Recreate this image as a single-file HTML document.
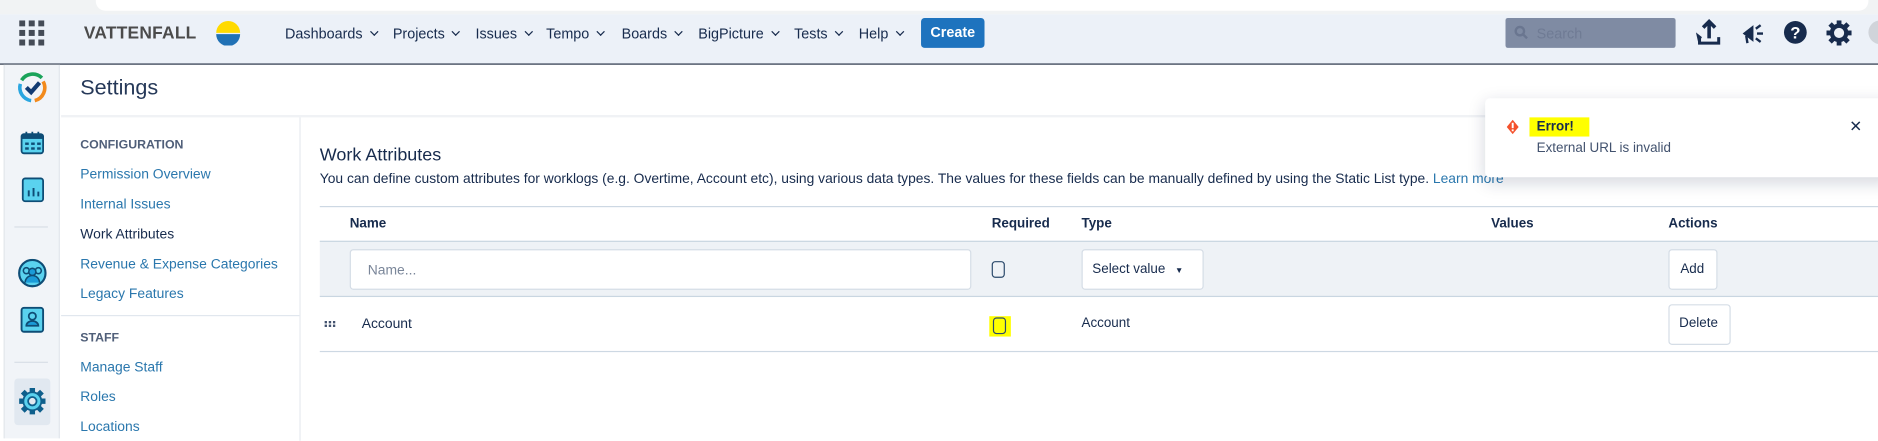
<!DOCTYPE html>
<html><head><meta charset="utf-8"><style>
*{box-sizing:border-box;margin:0;padding:0}
html,body{width:1878px;height:438px;overflow:hidden;background:#fff;font-family:"Liberation Sans",sans-serif}
#w{position:absolute;left:0;top:0;width:1568px;height:366px;transform:scale(1.1977);transform-origin:0 0}
.a{position:absolute;white-space:nowrap}
.nav{font-size:12px;color:#172b4d;top:21px}
.nav:after{content:"";display:inline-block;width:4px;height:4px;border-right:1.5px solid #172b4d;border-bottom:1.5px solid #172b4d;transform:rotate(45deg);margin-left:7px;position:relative;top:-3px}
.ln{font-size:11.6px;color:#2a77ad;left:67px}
.hd{font-size:10.3px;font-weight:bold;color:#505f79;left:67px}
.th{font-size:11.2px;font-weight:bold;color:#172b4d;top:181px}
.hl{position:absolute;height:1px;background:#cdd8e3}
.box{position:absolute;border:1px solid #d5dde6;border-radius:3px;background:#fff}
.cb{position:absolute;width:11px;height:14px;border:1.5px solid #2b4a6b;border-radius:3px}
</style></head><body><div id="w">
<div class="a" style="left:0;top:0;width:1568px;height:12px;background:#f1f3f4"></div>
<div class="a" style="left:80px;top:0;width:1480px;height:9px;background:#fff;border-radius:0 0 8px 8px"></div>
<div class="a" style="left:0;top:12px;width:1568px;height:42px;background:#ecf1f8;border-bottom:1.5px solid #2a3547"></div>
<svg class="a" style="left:16px;top:17px" width="21" height="21"><g fill="#454c57"><rect x="0" y="0" width="5" height="5"/><rect x="8" y="0" width="5" height="5"/><rect x="16" y="0" width="5" height="5"/><rect x="0" y="8" width="5" height="5"/><rect x="8" y="8" width="5" height="5"/><rect x="16" y="8" width="5" height="5"/><rect x="0" y="16" width="5" height="5"/><rect x="8" y="16" width="5" height="5"/><rect x="16" y="16" width="5" height="5"/></g></svg>
<div class="a" style="left:70px;top:20px;font-size:14.5px;font-weight:bold;color:#4b4b4b;letter-spacing:.2px">VATTENFALL</div>
<svg class="a" style="left:180px;top:17px" width="21" height="21"><path d="M0.5 10.5A10 10 0 0 1 20.5 10.5Z" fill="#ffda00"/><path d="M0.5 11.5A10 10 0 0 0 20.5 11.5Z" fill="#2071b5"/></svg>
<div class="a nav" style="left:238px">Dashboards</div>
<div class="a nav" style="left:328px">Projects</div>
<div class="a nav" style="left:397px">Issues</div>
<div class="a nav" style="left:456px">Tempo</div>
<div class="a nav" style="left:519px">Boards</div>
<div class="a nav" style="left:583px">BigPicture</div>
<div class="a nav" style="left:663px">Tests</div>
<div class="a nav" style="left:717px">Help</div>
<div class="a" style="left:769px;top:15px;width:53px;height:25px;background:#1e73be;border-radius:3px;color:#fff;font-size:12px;font-weight:bold;text-align:center;line-height:25px">Create</div>
<div class="a" style="left:1257px;top:15px;width:142px;height:25px;background:#7f8ba3;border-radius:2px"></div>
<svg class="a" style="left:1264px;top:21px" width="12" height="12"><circle cx="5" cy="5" r="3.5" stroke="#6a7690" stroke-width="2" fill="none"/><path d="M8 8l3 3" stroke="#6a7690" stroke-width="2"/></svg>
<div class="a" style="left:1283px;top:21px;font-size:12px;color:#6f7b94">Search</div>
<svg class="a" style="left:1414px;top:15px" width="24" height="25"><path d="M13 3v14M8 8l5-5 5 5" stroke="#172b4d" stroke-width="3" fill="none"/><path d="M5 16v5h16v-5" stroke="#172b4d" stroke-width="2.5" fill="none"/><path d="M2 12l5 4-3 5" fill="#172b4d"/></svg>
<svg class="a" style="left:1452px;top:17px" width="22" height="22"><path d="M3 11l9-7v14z" fill="#172b4d"/><path d="M14 7l4-3M15 11h5M14 15l4 3" stroke="#172b4d" stroke-width="2"/><path d="M6 13l1 6" stroke="#172b4d" stroke-width="2"/></svg>
<svg class="a" style="left:1489px;top:17px" width="20" height="20"><circle cx="10" cy="10" r="9.5" fill="#172b4d"/><text x="10" y="15" fill="#fff" font-size="14" font-weight="bold" text-anchor="middle" font-family="Liberation Sans">?</text></svg>
<svg class="a" style="left:1525px;top:17px" width="21" height="21"><circle cx="10.5" cy="10.5" r="6" stroke="#172b4d" stroke-width="3.5" fill="none"/><g stroke="#172b4d" stroke-width="4"><path d="M10.5 0v4M10.5 17v4M0 10.5h4M17 10.5h4M3 3l3 3M15 15l3 3M3 18l3-3M15 6l3-3"/></g></svg>
<div class="a" style="left:1560px;top:17px;width:20px;height:20px;border-radius:50%;background:#d0d4da"></div>

<div class="a" style="left:3px;top:54px;width:47px;height:312px;background:#f1f4f8;border-left:1px solid #e3e7ec;border-right:1px solid #e3e7ec"></div>
<svg class="a" style="left:14px;top:60px" width="26" height="26"><path d="M4 7A11 11 0 0 1 21 5" stroke="#1aa35a" stroke-width="3" fill="none"/><path d="M22 8A11 11 0 0 1 15 24" stroke="#f28a1c" stroke-width="3" fill="none"/><path d="M12 24A11 11 0 0 1 3 10" stroke="#2aa6e0" stroke-width="3" fill="none"/><path d="M8 13l4 4 7-8" stroke="#123b72" stroke-width="3.5" fill="none"/></svg>
<svg class="a" style="left:17px;top:109px" width="20" height="20"><rect x="1" y="3" width="18" height="16" rx="2" fill="#5ad2ef" stroke="#0e4d76" stroke-width="1.5"/><rect x="1" y="3" width="18" height="4" fill="#0e4d76"/><path d="M5 1v4M10 1v4M15 1v4" stroke="#0e4d76" stroke-width="1.5"/><g fill="#0e4d76"><rect x="4" y="10" width="3" height="2"/><rect x="9" y="10" width="3" height="2"/><rect x="14" y="10" width="3" height="2"/><rect x="4" y="14" width="3" height="2"/><rect x="9" y="14" width="3" height="2"/><rect x="14" y="14" width="3" height="2"/></g></svg>
<svg class="a" style="left:18px;top:148px" width="19" height="21"><rect x="1" y="1" width="17" height="19" rx="2" fill="#5ad2ef" stroke="#0e4d76" stroke-width="1.5"/><path d="M6 16v-5M10 16v-7M14 16v-4" stroke="#0e4d76" stroke-width="1.6"/></svg>
<div class="a" style="left:12px;top:189px;width:28px;height:1px;background:#d8dee6"></div>
<svg class="a" style="left:15px;top:216px" width="24" height="24"><circle cx="12" cy="12" r="11" fill="#5ad2ef" stroke="#0e4d76" stroke-width="1.8"/><circle cx="7" cy="10" r="2.5" fill="none" stroke="#0e4d76" stroke-width="1.3"/><circle cx="17" cy="10" r="2.5" fill="none" stroke="#0e4d76" stroke-width="1.3"/><circle cx="12" cy="11" r="3" fill="#1a9bd8" stroke="#0e4d76" stroke-width="1.3"/><path d="M6 20a6 6 0 0 1 12 0" fill="#1a9bd8" stroke="#0e4d76" stroke-width="1.3"/></svg>
<svg class="a" style="left:17px;top:256px" width="20" height="22"><rect x="1" y="1" width="18" height="20" rx="2" fill="#5ad2ef" stroke="#0e4d76" stroke-width="1.6"/><circle cx="10" cy="8" r="3" fill="none" stroke="#0e4d76" stroke-width="1.5"/><path d="M5 16a5 4 0 0 1 10 0z" fill="#1a9bd8" stroke="#0e4d76" stroke-width="1.5"/></svg>
<div class="a" style="left:12px;top:302px;width:28px;height:1px;background:#d8dee6"></div>
<div class="a" style="left:12px;top:316px;width:30px;height:39px;background:#e1e8f0;border-radius:3px"></div>
<svg class="a" style="left:15px;top:323px" width="24" height="24"><g stroke="#0e5f8c" stroke-width="4.5"><path d="M12 1v5M12 18v5M1 12h5M18 12h5M4 4l3.5 3.5M16.5 16.5L20 20M4 20l3.5-3.5M16.5 7.5L20 4"/></g><circle cx="12" cy="12" r="7.5" fill="#5ad2ef" stroke="#0e5f8c" stroke-width="1.5"/><circle cx="12" cy="12" r="3.5" fill="#e1e8f0" stroke="#0e5f8c" stroke-width="1.5"/></svg>

<div class="a" style="left:67px;top:63px;font-size:18px;color:#253858">Settings</div>
<div class="a" style="left:51px;top:96px;width:1517px;height:2px;background:#f0f2f5"></div>
<div class="a" style="left:250px;top:98px;width:1px;height:270px;background:#e6eaef"></div>
<div class="a hd" style="top:116px">CONFIGURATION</div>
<div class="a ln" style="top:139px">Permission Overview</div>
<div class="a ln" style="top:164px">Internal Issues</div>
<div class="a ln" style="top:189px;color:#172b4d">Work Attributes</div>
<div class="a ln" style="top:214px">Revenue &amp; Expense Categories</div>
<div class="a ln" style="top:239px">Legacy Features</div>
<div class="a" style="left:51px;top:263px;width:199px;height:1px;background:#e1e7ee"></div>
<div class="a hd" style="top:277px">STAFF</div>
<div class="a ln" style="top:300px">Manage Staff</div>
<div class="a ln" style="top:325px">Roles</div>
<div class="a ln" style="top:350px">Locations</div>

<div class="a" style="left:267px;top:121px;font-size:15px;color:#172b4d">Work Attributes</div>
<div class="a" style="left:267px;top:144px;font-size:11.55px;color:#172b4d">You can define custom attributes for worklogs (e.g. Overtime, Account etc), using various data types. The values for these fields can be manually defined by using the Static List type. <span style="color:#2a77ad">Learn more</span></div>
<div class="hl" style="left:267px;top:172px;width:1301px"></div>
<div class="a th" style="left:292px">Name</div>
<div class="a th" style="left:828px">Required</div>
<div class="a th" style="left:903px">Type</div>
<div class="a th" style="left:1245px">Values</div>
<div class="a th" style="left:1393px">Actions</div>
<div class="a" style="left:267px;top:201px;width:1301px;height:47px;background:#eef2f6;border-top:1px solid #c9d6e1;border-bottom:1px solid #c9d6e1"></div>
<div class="box" style="left:292px;top:208px;width:519px;height:34px"></div>
<div class="a" style="left:307px;top:219px;font-size:11.6px;color:#7a8699">Name...</div>
<div class="cb" style="left:828px;top:218px"></div>
<div class="box" style="left:903px;top:208px;width:102px;height:34px"></div>
<div class="a" style="left:912px;top:219px;font-size:11.2px;color:#172b4d">Select value <span style="font-size:7px;margin-left:5px">▼</span></div>
<div class="box" style="left:1393px;top:208px;width:41px;height:34px"></div>
<div class="a" style="left:1403px;top:219px;font-size:11.2px;color:#172b4d">Add</div>
<svg class="a" style="left:271px;top:268px" width="9" height="5"><g fill="#42526e"><rect x="0" y="0" width="2" height="2"/><rect x="3.5" y="0" width="2" height="2"/><rect x="7" y="0" width="2" height="2"/><rect x="0" y="3" width="2" height="2"/><rect x="3.5" y="3" width="2" height="2"/><rect x="7" y="3" width="2" height="2"/></g></svg>
<div class="a" style="left:302px;top:264px;font-size:11.6px;color:#172b4d">Account</div>
<div class="a" style="left:826px;top:264px;width:18px;height:17px;background:#ffff00"></div>
<div class="cb" style="left:829px;top:265px"></div>
<div class="a" style="left:903px;top:264px;font-size:11.2px;color:#172b4d">Account</div>
<div class="box" style="left:1393px;top:254px;width:52px;height:34px"></div>
<div class="a" style="left:1402px;top:264px;font-size:11.2px;color:#172b4d">Delete</div>
<div class="hl" style="left:267px;top:293px;width:1301px"></div>

<div class="a" style="left:1240px;top:82px;width:340px;height:66px;background:#fff;border-radius:4px;box-shadow:0 4px 14px rgba(9,30,66,.18)"></div>
<svg class="a" style="left:1258px;top:100px" width="10" height="12"><path d="M5 0l5 6-5 6-5-6z" fill="#f4512c"/><rect x="4.2" y="2.5" width="1.6" height="4.5" fill="#fff"/><rect x="4.2" y="8" width="1.6" height="1.6" fill="#fff"/></svg>
<div class="a" style="left:1277px;top:98px;width:50px;height:16px;background:#ffff00"></div>
<div class="a" style="left:1283px;top:100px;font-size:11.2px;font-weight:bold;color:#172b4d">Error!</div>
<div class="a" style="left:1283px;top:118px;font-size:11.2px;color:#42526e">External URL is invalid</div>
<div class="a" style="left:1544px;top:98px;font-size:13px;color:#172b4d">✕</div>
</div></body></html>
